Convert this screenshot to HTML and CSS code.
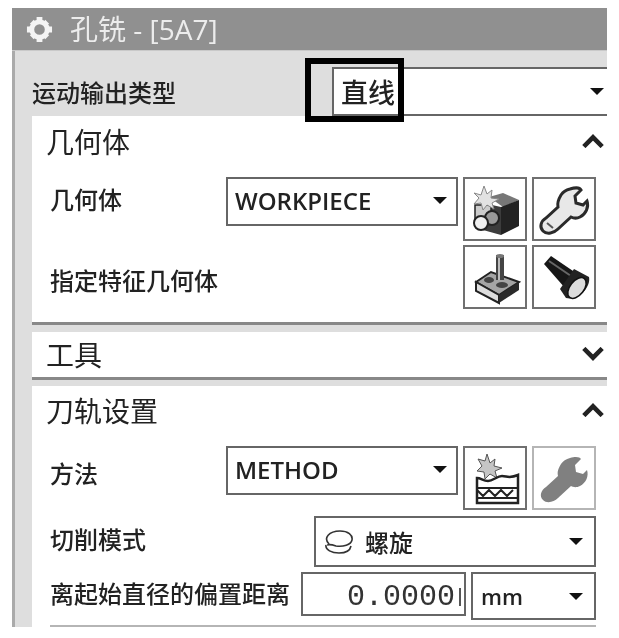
FILE: index.html
```html
<!DOCTYPE html>
<html lang="zh-CN">
<head>
    <meta charset="UTF-8">
    <title>孔铣 - [5A7]</title>
    <link rel="stylesheet" href="styles.css">
</head>
<body>
    <div class="dialog">
        <div class="title-bar">
            <svg class="gear" viewBox="0 0 28 28">
                <circle cx="14" cy="14" r="8" fill="none" stroke="#f4f4f4" stroke-width="5"/>
                <path d="M11 1h6v5h-6zM11 22h6v5h-6zM1 11h5v6H1zM22 11h5v6h-5zM4 8l4-4 3 3-4 4zM20 4l4 4-4 3-3-3zM4 20l3-3 4 4-3 3zM24 20l-4 4-3-3 4-4z" fill="#f4f4f4"/>
            </svg>
            <span class="title-text">孔铣 - [5A7]</span>
        </div>
        <div class="body">
            <div class="type-row">
                <span class="type-label">运动输出类型</span>
                <div class="type-select">
                    <span>直线</span>
                    <i class="arrow"></i>
                </div>
                <div class="callout"></div>
            </div>

            <section class="group group-geometry">
                <div class="group-head">
                    <span>几何体</span>
                    <svg class="chevron" viewBox="0 0 24 14"><path d="M2 13 12 3l10 10" fill="none" stroke="#222" stroke-width="5"/></svg>
                </div>
                <div class="row row-first">
                    <span class="row-label">几何体</span>
                    <div class="select select-wide"><span>WORKPIECE</span><i class="arrow"></i></div>
                    <button class="icon-btn">
                        <svg viewBox="0 0 60 60">
                            <path d="M24 18 38 14l16 7-16 7z" fill="#777"/>
                            <path d="M36 28l18-7v26l-18 9z" fill="#222"/>
                            <path d="M18 24l18 4v28l-18-5z" fill="#3c3c3c"/>
                            <path d="M10 26h16v18H10z" fill="#ccc" stroke="#222" stroke-width="1.5"/>
                            <path d="M19 7l3 8 5-4-1 8 8 1-7 4 2 6-7-4-4 5-2-7-7 1 5-6-5-5 7 2z" fill="#e2e2e2" stroke="#888" stroke-width="1"/>
                            <circle cx="27" cy="39" r="7" fill="#999" stroke="#222" stroke-width="2"/>
                            <circle cx="16" cy="44" r="7" fill="#f0f0f0" stroke="#222" stroke-width="2"/>
                        </svg>
                    </button>
                    <button class="icon-btn">
                        <svg viewBox="0 0 60 60">
                            <path d="M36 10C42 8 46 9 47 11L41 17 42 24 49 26 53 22C55 28 52 35 46 38 42 40 39 39 37 38L24 50C20 54 13 56 9 52 5 48 7 42 12 39L24 28C23 24 24 21 27 16 29 13 32 11 36 10Z" fill="#e8e8e8" stroke="#2a2a2a" stroke-width="3"/>
                            <path d="M13 44l6 5" stroke="#555" stroke-width="2"/>
                        </svg>
                    </button>
                </div>
                <div class="row row-second">
                    <span class="row-label">指定特征几何体</span>
                    <button class="icon-btn">
                        <svg viewBox="0 0 60 60">
                            <path d="M11 35 26 25l28 10-20 13z" fill="#a5a5a5" stroke="#222" stroke-width="2"/>
                            <path d="M11 35l23 13v8L11 44z" fill="#ddd" stroke="#222" stroke-width="2"/>
                            <path d="M34 48l20-13v8L34 56z" fill="#2a2a2a"/>
                            <ellipse cx="24" cy="33" rx="5" ry="3" fill="#444"/>
                            <ellipse cx="37" cy="38" rx="6" ry="3" fill="#444"/>
                            <path d="M31 8h8v25h-8z" fill="#444"/>
                            <path d="M33 8h2v25h-2z" fill="#bbb"/>
                            <ellipse cx="35" cy="9" rx="4" ry="2" fill="#777"/>
                        </svg>
                    </button>
                    <button class="icon-btn">
                        <svg viewBox="0 0 60 60">
                            <path d="M10 17l7-8 25 17-11 15z" fill="#161616"/>
                            <path d="M15 14l22 15" stroke="#666" stroke-width="2"/>
                            <path d="M40 22l15 8c2 9-9 24-23 21l-6-9z" fill="#222"/>
                            <ellipse cx="43" cy="41" rx="7" ry="12" transform="rotate(38 43 41)" fill="#dcdcdc" stroke="#111" stroke-width="1.5"/>
                        </svg>
                    </button>
                </div>
            </section>

            <section class="group group-tool">
                <div class="group-head">
                    <span>工具</span>
                    <svg class="chevron" viewBox="0 0 24 14"><path d="M2 1l10 10L22 1" fill="none" stroke="#222" stroke-width="5"/></svg>
                </div>
            </section>

            <section class="group group-path">
                <div class="group-head">
                    <span>刀轨设置</span>
                    <svg class="chevron" viewBox="0 0 24 14"><path d="M2 13 12 3l10 10" fill="none" stroke="#222" stroke-width="5"/></svg>
                </div>
                <div class="row row-method">
                    <span class="row-label">方法</span>
                    <div class="select select-wide"><span>METHOD</span><i class="arrow"></i></div>
                    <button class="icon-btn">
                        <svg viewBox="0 0 60 60">
                            <path d="M22 6l3 9 5-4-1 7 8 2-7 3 2 7-7-4-5 5-1-7-7-1 5-5-4-7 7 2z" fill="#c5c5c5" stroke="#555" stroke-width="1"/>
                            <path d="M12 30c4 0 6 3 11 3s9-5 14-5 7 3 16-1v28H12z" fill="#fff" stroke="#222" stroke-width="2.5"/>
                            <path d="M12 40h41M12 42l6 6 6-6 6 6 6-6 6 6 6-6M12 50h41" fill="none" stroke="#222" stroke-width="2"/>
                        </svg>
                    </button>
                    <button class="icon-btn icon-btn-off">
                        <svg viewBox="0 0 60 60">
                            <path d="M36 10C42 8 46 9 47 11L41 17 42 24 49 26 53 22C55 28 52 35 46 38 42 40 39 39 37 38L24 50C20 54 13 56 9 52 5 48 7 42 12 39L24 28C23 24 24 21 27 16 29 13 32 11 36 10Z" fill="#808080"/>
                        </svg>
                    </button>
                </div>
                <div class="row row-mode">
                    <span class="row-label">切削模式</span>
                    <div class="select select-mode">
                        <span class="mode-value">
                            <svg class="spiral" viewBox="0 0 30 26"><path d="M5 15C-1 9 5 2 16 2c8 0 13 4 12 9-1 5-9 7-16 6-3-1-6-2-9-1M2 16c-1 5 6 8 13 8 6 0 11-2 12-7" fill="none" stroke="#333" stroke-width="1.6"/></svg>
                            <span>螺旋</span>
                        </span>
                        <i class="arrow"></i>
                    </div>
                </div>
                <div class="row row-offset">
                    <span class="row-label">离起始直径的偏置距离</span>
                    <div class="number-input"><span>0.0000</span><i class="caret"></i></div>
                    <div class="select select-unit"><span>mm</span><i class="arrow"></i></div>
                </div>
                <div class="rule"></div>
            </section>
        </div>
    </div>
</body>
</html>
```

FILE: styles.css
```css
* {
    box-sizing: border-box;
}

html, body {
    margin: 0;
    height: 100%;
    background-color: #ffffff;
    overflow: hidden;
}

body {
    padding: 8px 12px 0;
    font-family: "Noto Sans CJK SC", "Noto Sans", sans-serif;
    font-weight: 500;
    color: #222;
}

.dialog {
    width: 595px;
    height: 619px;
    display: flex;
    flex-direction: column;
    overflow: hidden;
    filter: blur(0.5px);
}

.title-bar {
    height: 43px;
    flex: none;
    display: flex;
    align-items: center;
    gap: 17px;
    padding-left: 14px;
    background-color: #909090;
    border-bottom: 1px solid #c9c9c9;
}

.gear {
    width: 27px;
    height: 27px;
}

.title-text {
    font-family: "Open Sans", "Noto Sans CJK SC", sans-serif;
    font-weight: 400;
    font-size: 28px;
    color: #ececec;
    line-height: 1;
}

.body {
    flex: 1;
    padding-left: 17px;
    background-color: #dedede;
    border-left: 3px solid #aaaaaa;
    display: flex;
    flex-direction: column;
}

/* top row, select runs off the right edge */
.type-row {
    height: 65px;
    flex: none;
    position: relative;
    display: flex;
    align-items: flex-end;
}

.type-label {
    width: 300px;
    flex: none;
    font-size: 24px;
    line-height: 24px;
    margin-bottom: 12px;
}

.type-select {
    flex: 1;
    height: 49px;
    display: flex;
    align-items: center;
    justify-content: space-between;
    padding: 0 3px 0 7px;
    background-color: #ffffff;
    border: 1px solid #666;
    border-width: 2px 0 2px 2px;
    font-size: 27px;
}

.callout {
    position: absolute;
    left: 273px;
    top: 7px;
    width: 99px;
    height: 64px;
    border: 6px solid #000000;
}

.arrow {
    width: 0;
    height: 0;
    flex: none;
    border-left: 7px solid transparent;
    border-right: 7px solid transparent;
    border-top: 7px solid #111;
}

.group {
    background-color: #ffffff;
    flex: none;
    padding: 0 11px 0 14px;
}

.group-geometry {
    height: 209px;
    border-bottom: 3px solid #888;
    margin-bottom: 7px;
}

.group-tool {
    height: 48px;
    border-bottom: 3px solid #888;
    margin-bottom: 6px;
}

.group-path {
    flex: 1;
}

.group-head {
    height: 44px;
    display: flex;
    align-items: center;
    justify-content: space-between;
    font-size: 28px;
    font-weight: 400;
    line-height: 1;
}

.group-geometry .group-head {
    height: 50px;
}

.group-path .group-head {
    height: 48px;
}

.chevron {
    width: 22px;
    height: 14px;
    margin-right: -8px;
}

.row {
    display: flex;
    align-items: center;
}

.row-first {
    margin-top: 11px;
    height: 64px;
    align-items: flex-start;
}

.row-second {
    margin-top: 4px;
    height: 63px;
}

.row-method {
    margin-top: 12px;
    height: 65px;
    align-items: flex-start;
}

.row-mode {
    margin-top: 5px;
    height: 51px;
}

.row-offset {
    margin-top: 5px;
    height: 48px;
    align-items: flex-start;
}

.row-label {
    width: 180px;
    flex: none;
    padding-left: 4px;
    font-size: 24px;
    line-height: 24px;
    white-space: nowrap;
}

.row-first .row-label {
    margin-top: 10px;
}

.row-method .row-label {
    margin-top: 15px;
}

.row-second .row-label {
    margin: 6px auto 0 0;
    width: auto;
}

.row-mode .row-label {
    width: 268px;
    margin-bottom: 6px;
}

.row-offset .row-label {
    width: 255px;
    margin-top: 9px;
}

.select {
    height: 49px;
    display: flex;
    align-items: center;
    justify-content: space-between;
    background-color: #ffffff;
    border: 2px solid #666;
    font-family: "Open Sans", "Noto Sans CJK SC", sans-serif;
    font-weight: 600;
    font-size: 24px;
    padding: 0 9px 0 8px;
}

.select-wide {
    width: 233px;
    margin-right: 5px;
    padding-left: 7px;
    padding-bottom: 2px;
}

.select-mode {
    width: 282px;
    height: 51px;
    padding-right: 11px;
}

.select-unit {
    width: 125px;
    height: 48px;
    margin-left: 5px;
    font-size: 22px;
    padding-right: 11px;
}

.mode-value {
    display: flex;
    align-items: center;
    gap: 11px;
    font-family: "Noto Sans CJK SC", sans-serif;
    font-weight: 500;
}

.spiral {
    width: 30px;
    height: 26px;
}

.number-input {
    width: 165px;
    height: 44px;
    flex: none;
    display: flex;
    align-items: center;
    padding: 6px 0 0 44px;
    border: 2px solid #666;
    background-color: #ffffff;
    font-family: "Liberation Mono", monospace;
    font-weight: 400;
    font-size: 30px;
    line-height: 34px;
    white-space: nowrap;
    color: #333;
}

.caret {
    width: 2px;
    height: 18px;
    margin-left: 4px;
    background-color: #555;
}

.icon-btn {
    width: 64px;
    height: 64px;
    flex: none;
    padding: 0;
    margin: 0 0 0 5px;
    background-color: #ffffff;
    border: 2px solid #707070;
    display: flex;
    align-items: center;
    justify-content: center;
}

.icon-btn:first-of-type {
    margin-left: 0;
}

.icon-btn svg {
    width: 60px;
    height: 60px;
}

.icon-btn-off {
    border-color: #b5b5b5;
}

.rule {
    height: 3px;
    margin: 5px 0 0 4px;
    background-color: #b5b5b5;
}
```
